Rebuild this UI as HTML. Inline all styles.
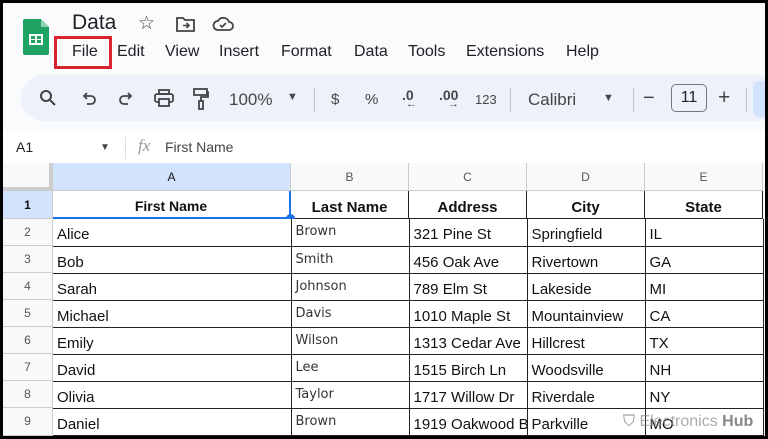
<!DOCTYPE html>
<html><head><style>
*{margin:0;padding:0;box-sizing:border-box}
body{width:768px;height:439px;background:#000;position:relative;overflow:hidden;font-family:"Liberation Sans",Arial,sans-serif}
#app{position:absolute;left:3px;top:3px;width:762px;height:433px;background:#f9fbfd;overflow:hidden}
.a{position:absolute;white-space:nowrap}
.menu{top:40px;font-size:16px;color:#202124}
.tb{color:#444746;font-size:16px}
.cell{position:absolute;border-right:1px solid #222;border-bottom:1px solid #222;background:#fff;font-size:15px;color:#111;overflow:hidden;white-space:nowrap}
.rh{position:absolute;left:0;width:50px;background:#f8f9fa;border-bottom:1px solid #ccc;border-right:1px solid #ccc;font-size:12px;color:#555;text-align:center}
.ch{position:absolute;top:160px;height:28px;background:#f8f9fa;border-right:1px solid #ccc;border-bottom:1px solid #ccc;font-size:12px;color:#555;text-align:center;line-height:28px}
.r1{font-weight:bold;text-align:center}
#rows td{height:27px;padding:7px 0 0 4px;border-right:1px solid #222;border-bottom:1px solid #222;background:#fff;white-space:nowrap;overflow:hidden;vertical-align:top;line-height:18px}
#rows td.b{padding-top:4px;font-family:"DejaVu Sans",sans-serif;font-size:13px;color:#333}
</style></head><body><div id="app">
<svg class="a" style="left:20px;top:16px" width="26" height="36" viewBox="0 0 26 36"><path d="M2 0h16l8 8v26a2 2 0 0 1-2 2H2a2 2 0 0 1-2-2V2a2 2 0 0 1 2-2z" fill="#1ea362"/><path d="M18 0v8h8z" fill="#8ed1b1"/><rect x="6" y="15" width="14" height="11" fill="#fff"/><rect x="8" y="17" width="4" height="3" fill="#1ea362"/><rect x="14" y="17" width="4" height="3" fill="#1ea362"/><rect x="8" y="21" width="4" height="3" fill="#1ea362"/><rect x="14" y="21" width="4" height="3" fill="#1ea362"/></svg>
<div class="a" style="left:69px;top:8px;font-size:21px;color:#202124">Data</div>
<div class="a" style="left:135px;top:9px;font-size:19px;color:#444">☆</div>
<svg class="a" style="left:173px;top:13px" width="20" height="16" viewBox="0 0 20 16"><path d="M1 2h6l2 2h9v11H1z" fill="none" stroke="#444" stroke-width="1.8"/><path d="M7 9.5h6M10.5 7l2.5 2.5-2.5 2.5" fill="none" stroke="#444" stroke-width="1.6"/></svg>
<svg class="a" style="left:209px;top:13px" width="22" height="16" viewBox="0 0 22 16"><path d="M6 14h11a4 4 0 0 0 0-8 6 6 0 0 0-11-1 4.5 4.5 0 0 0 0 9z" fill="none" stroke="#444" stroke-width="1.8"/><path d="M8 9l2 2 4-4" fill="none" stroke="#444" stroke-width="1.6"/></svg>
<div class="a" style="left:51px;top:33px;width:58px;height:33px;border:3px solid #d9232e"></div>
<div class="a menu" style="left:69px">File</div>
<div class="a menu" style="left:114px">Edit</div>
<div class="a menu" style="left:162px">View</div>
<div class="a menu" style="left:216px">Insert</div>
<div class="a menu" style="left:278px">Format</div>
<div class="a menu" style="left:351px">Data</div>
<div class="a menu" style="left:405px">Tools</div>
<div class="a menu" style="left:463px">Extensions</div>
<div class="a menu" style="left:563px">Help</div>
<div class="a" style="left:18px;top:72px;width:760px;height:46px;background:#edf2fa;border-radius:23px"></div>
<svg class="a" style="left:36px;top:86px" width="18" height="18" viewBox="0 0 18 18"><circle cx="7" cy="7" r="5" fill="none" stroke="#444" stroke-width="2"/><path d="M11 11l5 5" stroke="#444" stroke-width="2"/></svg>
<svg class="a" style="left:79px;top:88px" width="16" height="16" viewBox="0 0 16 16"><path d="M5 2L2 5l3 3M2 5h7a4 4 0 0 1 0 8H5" fill="none" stroke="#444" stroke-width="1.8"/></svg>
<svg class="a" style="left:114px;top:88px" width="16" height="16" viewBox="0 0 16 16"><path d="M11 2l3 3-3 3M14 5H7a4 4 0 0 0 0 8h4" fill="none" stroke="#444" stroke-width="1.8"/></svg>
<svg class="a" style="left:151px;top:86px" width="20" height="18" viewBox="0 0 20 18"><rect x="5" y="1" width="10" height="4" fill="none" stroke="#444" stroke-width="1.8"/><rect x="1" y="5" width="18" height="8" rx="2" fill="none" stroke="#444" stroke-width="1.8"/><rect x="5" y="10" width="10" height="7" fill="#edf2fa" stroke="#444" stroke-width="1.8"/></svg>
<svg class="a" style="left:190px;top:85px" width="16" height="22" viewBox="0 0 16 22"><rect x="1" y="1" width="13" height="6" fill="none" stroke="#444" stroke-width="1.8"/><path d="M14 4h1v5H8v4" fill="none" stroke="#444" stroke-width="1.8"/><rect x="6" y="13" width="4" height="8" fill="none" stroke="#444" stroke-width="1.8"/></svg>
<div class="a tb" style="left:226px;top:87px;font-size:17px">100%</div>
<div class="a tb" style="left:284px;top:88px;font-size:11px">▼</div>
<div class="a" style="left:311px;top:85px;width:1px;height:24px;background:#c7c7c7"></div>
<div class="a tb" style="left:328px;top:88px;font-size:15px">$</div>
<div class="a tb" style="left:362px;top:88px;font-size:15px">%</div>
<div class="a tb" style="left:399px;top:84px;font-size:14px;font-weight:bold">.0</div>
<div class="a tb" style="left:403px;top:95px;font-size:11px">←</div>
<div class="a tb" style="left:436px;top:84px;font-size:14px;font-weight:bold">.00</div>
<div class="a tb" style="left:445px;top:95px;font-size:11px">→</div>
<div class="a tb" style="left:472px;top:89px;font-size:13px">123</div>
<div class="a" style="left:507px;top:85px;width:1px;height:24px;background:#c7c7c7"></div>
<div class="a tb" style="left:525px;top:87px;font-size:17px">Calibri</div>
<div class="a tb" style="left:600px;top:89px;font-size:11px">▼</div>
<div class="a" style="left:630px;top:85px;width:1px;height:24px;background:#c7c7c7"></div>
<div class="a tb" style="left:640px;top:84px;font-size:20px">−</div>
<div class="a" style="left:668px;top:81px;width:36px;height:28px;border:1px solid #777;border-radius:5px;text-align:center;line-height:26px;font-size:16px;color:#222">11</div>
<div class="a tb" style="left:715px;top:83px;font-size:21px">+</div>
<div class="a" style="left:743px;top:85px;width:1px;height:24px;background:#c7c7c7"></div>
<div class="a" style="left:750px;top:78px;width:20px;height:36px;background:#d3e3fd;border-radius:6px"></div>
<div class="a" style="left:0;top:128px;width:762px;height:32px;background:#fff"></div>
<div class="a" style="left:13px;top:136px;font-size:14px;color:#222">A1</div>
<div class="a" style="left:97px;top:139px;font-size:10px;color:#444">▼</div>
<div class="a" style="left:122px;top:134px;width:1px;height:22px;background:#ddd"></div>
<div class="a" style="left:135px;top:133px;font-size:17px;font-style:italic;font-family:'Liberation Serif',serif;color:#999">fx</div>
<div class="a" style="left:162px;top:136px;font-size:14px;color:#444">First Name</div>
<div class="a" style="left:0;top:160px;width:50px;height:28px;background:#f8f9fa;border-right:4px solid #ccc;border-bottom:4px solid #ccc"></div>
<div class="ch" style="left:50px;width:238px;background:#d3e3fd;color:#111">A</div>
<div class="ch" style="left:288px;width:118px">B</div>
<div class="ch" style="left:406px;width:118px">C</div>
<div class="ch" style="left:524px;width:118px">D</div>
<div class="ch" style="left:642px;width:118px">E</div>
<div class="rh" style="top:188px;height:28px;line-height:28px;background:#d3e3fd;color:#111;font-weight:bold">1</div>
<div class="rh" style="top:216px;height:27px;line-height:27px">2</div>
<div class="rh" style="top:243px;height:27px;line-height:27px">3</div>
<div class="rh" style="top:270px;height:27px;line-height:27px">4</div>
<div class="rh" style="top:297px;height:27px;line-height:27px">5</div>
<div class="rh" style="top:324px;height:27px;line-height:27px">6</div>
<div class="rh" style="top:351px;height:27px;line-height:27px">7</div>
<div class="rh" style="top:378px;height:27px;line-height:27px">8</div>
<div class="rh" style="top:405px;height:28px;line-height:27px">9</div>
<div class="cell r1" style="left:50px;top:188px;width:238px;height:28px;line-height:30px;font-size:14px;border-right:2px solid #1a73e8;border-bottom:2px solid #1a73e8">First Name</div>
<div class="cell r1" style="left:288px;top:188px;width:118px;height:28px;line-height:34px">Last Name</div>
<div class="cell r1" style="left:406px;top:188px;width:118px;height:28px;line-height:34px">Address</div>
<div class="cell r1" style="left:524px;top:188px;width:118px;height:28px;line-height:34px">City</div>
<div class="cell r1" style="left:642px;top:188px;width:118px;height:28px;line-height:34px">State</div>
<div class="a" style="left:283px;top:211px;width:9px;height:9px;border-radius:50%;background:#1a73e8"></div>
<div id="rows" style="position:absolute;left:50px;top:216px">
<table style="border-collapse:collapse;font-size:15px;color:#111;table-layout:fixed;width:710px">
<colgroup><col style="width:238px"><col style="width:118px"><col style="width:118px"><col style="width:118px"><col style="width:118px"></colgroup>
<tbody>
<tr><td>Alice</td><td class="b">Brown</td><td>321 Pine St</td><td>Springfield</td><td>IL</td></tr>
<tr><td>Bob</td><td class="b">Smith</td><td>456 Oak Ave</td><td>Rivertown</td><td>GA</td></tr>
<tr><td>Sarah</td><td class="b">Johnson</td><td>789 Elm St</td><td>Lakeside</td><td>MI</td></tr>
<tr><td>Michael</td><td class="b">Davis</td><td>1010 Maple St</td><td>Mountainview</td><td>CA</td></tr>
<tr><td>Emily</td><td class="b">Wilson</td><td>1313 Cedar Ave</td><td>Hillcrest</td><td>TX</td></tr>
<tr><td>David</td><td class="b">Lee</td><td>1515 Birch Ln</td><td>Woodsville</td><td>NH</td></tr>
<tr><td>Olivia</td><td class="b">Taylor</td><td>1717 Willow Dr</td><td>Riverdale</td><td>NY</td></tr>
<tr><td>Daniel</td><td class="b">Brown</td><td>1919 Oakwood Blvd</td><td>Parkville</td><td>MO</td></tr>
</tbody></table>
</div>
<div class="a" style="left:620px;top:410px;font-size:16px;color:#555;opacity:.7">&#x26C9; <span style="color:#888">Electronics</span> <b>Hub</b></div>
</div>
</body></html>
